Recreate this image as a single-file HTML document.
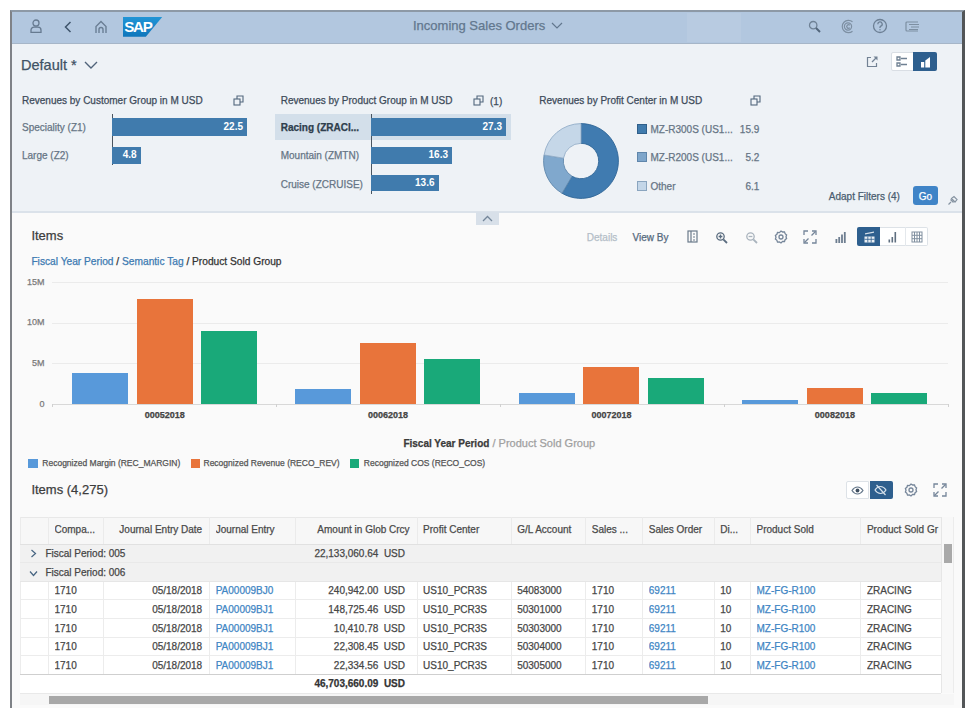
<!DOCTYPE html><html><head><meta charset="utf-8"><style>
*{margin:0;padding:0;box-sizing:border-box}
html,body{width:975px;height:714px;overflow:hidden;background:#fff;font-family:"Liberation Sans",sans-serif;color:#333}
.a{position:absolute;white-space:nowrap;-webkit-text-stroke:0.25px currentColor}
#frame{position:absolute;left:10px;top:10px;width:955px;height:698px;background:#fafafa;border-left:2px solid #7f8287;border-top:2px solid #8d99a6;border-right:3px solid #535658;overflow:hidden}
#hdr{position:absolute;left:0;top:0;width:100%;height:32px;background:#b2c7df;border-bottom:1px solid #a6b6c8}
#fb{position:absolute;left:0;top:32px;width:100%;height:169px;background:#eef2f6;border-bottom:2px solid #dbe2ea}
.t10{font-size:10px;line-height:12px}
.bar{position:absolute;background:#407bad;color:#fff;font-size:10px;font-weight:bold;text-align:right;padding-right:4px}
.ico{position:absolute}
</style></head><body><div id="frame"><div id="hdr">
<div class="a" style="left:675.2px;top:1px;width:54.3px;height:29px;background:#b8cbe1;"></div>
<svg class="ico" style="left:17.5px;top:7px;" width="12" height="14" viewBox="0 0 12 14"><g fill="none" stroke="#667a90" stroke-width="1.3"><circle cx="6" cy="4" r="3"/><path d="M1 13.5v-2.3a3 3 0 0 1 3-3h4a3 3 0 0 1 3 3v2.3z"/></g></svg>
<svg class="ico" style="left:51px;top:8px;" width="10" height="14" viewBox="0 0 10 14"><path d="M7.5 2L2.5 7l5 5" fill="none" stroke="#3f556c" stroke-width="1.5"/></svg>
<svg class="ico" style="left:82px;top:8px;" width="14" height="14" viewBox="0 0 14 14"><path d="M2 13V6.5L7 1.5l5 5V13M5 13V9.5a2 2 0 0 1 4 0V13" fill="none" stroke="#6a7e94" stroke-width="1.4"/></svg>
<svg class="ico" style="left:110.9px;top:4.9px;" width="40" height="20" viewBox="0 0 40 20"><defs><linearGradient id="sg" x1="0" y1="0" x2="0" y2="1"><stop offset="0" stop-color="#2195d6"/><stop offset="1" stop-color="#0f76bb"/></linearGradient></defs><path d="M0 0H39.2L22.8 19.7H0z" fill="url(#sg)"/><text x="1.2" y="14.7" font-family="Liberation Sans" font-weight="bold" font-size="15.2" fill="#fff" letter-spacing="-1.3">SAP</text></svg>
<div class="a" style="left:401px;top:6.3px;font-size:13px;line-height:15.6px;color:#62778e;font-weight:400;">Incoming Sales Orders</div>
<svg class="ico" style="left:539px;top:9.5px;" width="12" height="8" viewBox="0 0 12 8"><path d="M1 1l5 5 5-5" fill="none" stroke="#62778e" stroke-width="1.2"/></svg>
<svg class="ico" style="left:796px;top:8px;" width="14" height="14" viewBox="0 0 14 14"><g fill="none" stroke="#6f8296" stroke-width="1.3"><circle cx="5.2" cy="5.2" r="3.7"/><path d="M8 8L12 12" stroke="#52667b" stroke-width="1.9"/></g></svg>
<svg class="ico" style="left:829px;top:7px;" width="14" height="15" viewBox="0 0 14 15"><g fill="none" stroke="#7d8fa2" stroke-width="1.2"><path d="M11.5 2.8A6.2 6.2 0 1 0 11.5 12.2"/><circle cx="7" cy="7.5" r="3.6"/><path d="M8.8 6.2A1.8 1.8 0 1 0 8.8 8.8"/></g></svg>
<svg class="ico" style="left:860px;top:6px;" width="16" height="16" viewBox="0 0 16 16"><g fill="none" stroke="#6c7f94" stroke-width="1.3"><circle cx="8" cy="8" r="6.5"/><path d="M5.8 6.2a2.2 2.2 0 1 1 3 2c-.6.3-.8.7-.8 1.3v.6"/></g><circle cx="8" cy="11.8" r=".7" fill="#6c7f94"/></svg>
<svg class="ico" style="left:893px;top:9px;" width="15" height="11" viewBox="0 0 15 11"><g fill="none" stroke="#7d8fa2" stroke-width="1.2"><path d="M13 1H2a1 1 0 0 0-1 1v7a1 1 0 0 0 1 1h11"/><path d="M4 3.5h10M6 6h8M4 8.5h9"/></g></svg>
</div>
<div id="fb">
<div class="a" style="left:9px;top:12.7px;font-size:14.5px;line-height:17.4px;color:#3f5265;font-weight:400;">Default *</div>
<svg class="ico" style="left:72px;top:17px;" width="14" height="9" viewBox="0 0 14 9"><path d="M1 1l6 6 6-6" fill="none" stroke="#50637a" stroke-width="1.4"/></svg>
<svg class="ico" style="left:854px;top:12px;" width="12" height="12" viewBox="0 0 12 12"><g fill="none" stroke="#728294" stroke-width="1.2"><path d="M5 1.5H1.5v9h9V7"/><path d="M6 6l4.5-4.5"/></g><path d="M7.5 0.5h4v4z" fill="#728294"/></svg>
<div class="a" style="left:878.6px;top:7.8px;width:23px;height:19px;background:#fff;border:1px solid #d9dee4;border-radius:2px 0 0 2px"></div>
<svg class="ico" style="left:884px;top:12px;" width="12" height="11" viewBox="0 0 12 11"><path d="M1 1h3v3H1zM1 7h3v3H1zM5 2.5h6M5 8.5h6" fill="none" stroke="#6f8092" stroke-width="1.3"/></svg>
<div class="a" style="left:901.4px;top:7.8px;width:23.5px;height:19px;background:#2e5f8e;border-radius:0 2px 2px 0"></div>
<svg class="ico" style="left:907.5px;top:12px;" width="12" height="12" viewBox="0 0 12 12"><g fill="#fff"><rect x="1" y="6" width="3.2" height="5.5"/><path d="M5.3 11.5V4.5L10 1v10.5z"/></g></svg>
<div class="a" style="left:10px;top:51px;font-size:10px;line-height:12.0px;color:#3d4b5a;font-weight:400;">Revenues by Customer Group in M USD</div>
<svg class="ico" style="left:221px;top:51px;" width="11" height="11" viewBox="0 0 11 11"><g fill="none" stroke="#52677d" stroke-width="1.1"><rect x="1" y="4" width="6" height="6"/><path d="M4 4V1h6v6H7"/></g></svg>
<div class="a" style="left:10px;top:78.2px;font-size:10px;line-height:12.0px;color:#667585;font-weight:400;">Speciality (Z1)</div>
<div class="a" style="left:10px;top:106.2px;font-size:10px;line-height:12.0px;color:#667585;font-weight:400;">Large (Z2)</div>
<div class="a" style="left:99.5px;top:70px;width:1px;height:51px;background:#4a5560;"></div>
<div class="bar" style="left:100px;top:74.3px;width:135px;height:17.4px;line-height:17.4px">22.5</div>
<div class="bar" style="left:100px;top:102.9px;width:28.7px;height:16.8px;line-height:16.8px">4.8</div>
<div class="a" style="left:263.3px;top:70.3px;width:236px;height:25.4px;background:#d3dfea;"></div>
<div class="a" style="left:268.7px;top:51px;font-size:10px;line-height:12.0px;color:#3d4b5a;font-weight:400;">Revenues by Product Group in M USD</div>
<svg class="ico" style="left:461px;top:51px;" width="11" height="11" viewBox="0 0 11 11"><g fill="none" stroke="#52677d" stroke-width="1.1"><rect x="1" y="4" width="6" height="6"/><path d="M4 4V1h6v6H7"/></g></svg>
<div class="a" style="left:478px;top:52px;font-size:10px;line-height:12.0px;color:#3d4b5a;font-weight:400;">(1)</div>
<div class="a" style="left:268.7px;top:78.2px;font-size:10px;line-height:12.0px;color:#2f3e4d;font-weight:700;">Racing (ZRACI...</div>
<div class="a" style="left:268.7px;top:106.2px;font-size:10px;line-height:12.0px;color:#667585;font-weight:400;">Mountain (ZMTN)</div>
<div class="a" style="left:268.7px;top:134.5px;font-size:10px;line-height:12.0px;color:#667585;font-weight:400;">Cruise (ZCRUISE)</div>
<div class="a" style="left:358.5px;top:70px;width:1px;height:80px;background:#4a5560;"></div>
<div class="bar" style="left:359px;top:74.3px;width:135px;height:17.4px;line-height:17.4px">27.3</div>
<div class="bar" style="left:359px;top:102.9px;width:81px;height:16.8px;line-height:16.8px">16.3</div>
<div class="bar" style="left:359px;top:130.9px;width:67.5px;height:16.1px;line-height:16.1px">13.6</div>
<div class="a" style="left:527.3px;top:51px;font-size:10px;line-height:12.0px;color:#3d4b5a;font-weight:400;">Revenues by Profit Center in M USD</div>
<svg class="ico" style="left:738px;top:51px;" width="11" height="11" viewBox="0 0 11 11"><g fill="none" stroke="#52677d" stroke-width="1.1"><rect x="1" y="4" width="6" height="6"/><path d="M4 4V1h6v6H7"/></g></svg>
<svg class="ico" style="left:530.7px;top:79.2px;" width="76" height="76" viewBox="-38 -38 76 76"><path d="M0.00 -37.40A37.4 37.4 0 1 1 -18.95 32.24L-8.97 15.26A17.7 17.7 0 1 0 0.00 -17.70Z" fill="#407bb0" stroke="#2f6596" stroke-width="0.9"/><path d="M-18.95 32.24A37.4 37.4 0 0 1 -36.91 -6.02L-17.47 -2.85A17.7 17.7 0 0 0 -8.97 15.26Z" fill="#80a8cd" stroke="#6088ad" stroke-width="0.9"/><path d="M-36.91 -6.02A37.4 37.4 0 0 1 -0.00 -37.40L-0.00 -17.70A17.7 17.7 0 0 0 -17.47 -2.85Z" fill="#c5d7e8" stroke="#93aec8" stroke-width="0.9"/></svg>
<div class="a" style="left:625.2px;top:80px;width:10px;height:10px;background:#407bad;border:1px solid #2f5f8a"></div>
<div class="a" style="left:625.2px;top:108px;width:10px;height:10px;background:#7ea6cb;border:1px solid #5f86ab"></div>
<div class="a" style="left:625.2px;top:137px;width:10px;height:10px;background:#c3d6e8;border:1px solid #8aa5bf"></div>
<div class="a" style="left:638.5px;top:80.2px;font-size:10px;line-height:12.0px;color:#667585;font-weight:400;">MZ-R300S (US1...</div>
<div class="a" style="left:638.5px;top:108.2px;font-size:10px;line-height:12.0px;color:#667585;font-weight:400;">MZ-R200S (US1...</div>
<div class="a" style="left:638.5px;top:137.2px;font-size:10px;line-height:12.0px;color:#667585;font-weight:400;">Other</div>
<div class="a" style="left:707.3px;top:79.8px;font-size:10px;line-height:12.0px;color:#667585;font-weight:400;width:40px;text-align:right">15.9</div>
<div class="a" style="left:707.3px;top:107.8px;font-size:10px;line-height:12.0px;color:#667585;font-weight:400;width:40px;text-align:right">5.2</div>
<div class="a" style="left:707.3px;top:136.8px;font-size:10px;line-height:12.0px;color:#667585;font-weight:400;width:40px;text-align:right">6.1</div>
<div class="a" style="left:816.8px;top:146.5px;font-size:10px;line-height:12.0px;color:#4a5d70;font-weight:400;">Adapt Filters (4)</div>
<div class="a" style="left:900.8px;top:141.7px;width:25px;height:19.3px;background:#3f84c7;border-radius:3px"></div>
<div class="a" style="left:900.8px;top:146.5px;font-size:10px;line-height:12.0px;color:#fff;font-weight:400;width:25px;text-align:center">Go</div>
<svg class="ico" style="left:935px;top:151px;" width="11" height="11" viewBox="0 0 11 11"><path d="M1.5 9.5l2.5-2.5M3.5 4.5l3 3M4.5 3.5l2.5-2 3 3-2 2.5z" fill="none" stroke="#8593a1" stroke-width="1.2"/></svg>
</div>
<div class="a" style="left:463.7px;top:200px;width:23.3px;height:13px;background:#d8e0e9;"></div>
<svg class="ico" style="left:470px;top:203px;" width="11" height="7" viewBox="0 0 11 7"><path d="M1 6l4.5-4.5L10 6" fill="none" stroke="#74869a" stroke-width="1.3"/></svg>
<div class="a" style="left:19.4px;top:215.6px;font-size:13px;line-height:15.6px;color:#3d3d3d;font-weight:400;">Items</div>
<div class="a" style="left:19.4px;top:244.2px;font-size:10.2px;line-height:12.24px;color:#333;font-weight:400;"><span style="color:#3d7ab2">Fiscal Year Period</span> / <span style="color:#3d7ab2">Semantic Tag</span> / Product Sold Group</div>
<div class="a" style="left:574.8px;top:219.9px;font-size:10px;line-height:12.0px;color:#b4bec8;font-weight:400;">Details</div>
<div class="a" style="left:620.6px;top:219.9px;font-size:10px;line-height:12.0px;color:#566a7e;font-weight:400;">View By</div>
<svg class="ico" style="left:675px;top:218px;" width="11" height="13" viewBox="0 0 11 13"><g fill="none" stroke="#6a7a8a" stroke-width="1.2"><rect x="1" y="1" width="9" height="11"/><path d="M4 1v11M6 4h2M6 7h2M6 10h2"/></g></svg>
<svg class="ico" style="left:703px;top:218.5px;" width="13" height="13" viewBox="0 0 13 13"><g fill="none" stroke="#5a6c7f" stroke-width="1.3"><circle cx="5.5" cy="5.5" r="3.7"/><path d="M3.6 5.5h3.8M5.5 3.6v3.8"/><path d="M8.3 8.3l3.7 3.7" stroke-width="1.8"/></g></svg>
<svg class="ico" style="left:733px;top:218.5px;" width="13" height="13" viewBox="0 0 13 13"><g fill="none" stroke="#a9b3bd" stroke-width="1.3"><circle cx="5.5" cy="5.5" r="3.7"/><path d="M3.6 5.5h3.8"/><path d="M8.3 8.3l3.7 3.7" stroke-width="1.8"/></g></svg>
<svg class="ico" style="left:761.5px;top:218px;" width="14" height="14" viewBox="0 0 14 14"><g fill="none" stroke="#76869a" stroke-width="1.3"><path d="M7 1l1.6 1 1.9-.1.6 1.8 1.5 1.2-.6 1.8.6 1.8-1.5 1.2-.6 1.8-1.9-.1L7 13l-1.6-1-1.9.1-.6-1.8L1.4 9.1 2 7.3 1.4 5.5l1.5-1.2.6-1.8 1.9.1z"/><circle cx="7" cy="7" r="2"/></g></svg>
<svg class="ico" style="left:790.5px;top:217.5px;" width="14" height="14" viewBox="0 0 14 14"><g fill="none" stroke="#76869a" stroke-width="1.3"><path d="M1 5V1h4M9 13h4V9M1 9v4h4M13 5V1H9"/><path d="M8.5 5.5L12.5 1.5M5.5 8.5L1.5 12.5"/></g></svg>
<svg class="ico" style="left:821.5px;top:218.5px;" width="12" height="12" viewBox="0 0 12 12"><g fill="#6d7d8f"><rect x="1.5" y="8" width="1.8" height="4"/><rect x="4.3" y="6" width="1.8" height="6"/><rect x="7.1" y="3.5" width="1.8" height="8.5"/><rect x="9.9" y="1" width="1.8" height="11"/></g></svg>
<div class="a" style="left:844.9px;top:215.1px;width:23.4px;height:18.5px;background:#2e5f8e;border-radius:2px 0 0 2px"></div>
<svg class="ico" style="left:850.5px;top:218px;" width="13" height="13" viewBox="0 0 13 13"><g fill="#fff"><path d="M2 3.2L11 1.5v1.2L2 4.4z" opacity=".8"/><rect x="1.5" y="6.5" width="10" height="6" opacity=".9"/></g><g stroke="#2e5f8e" stroke-width=".8"><path d="M1.5 9.3h10M4.8 6.5v6M8.2 6.5v6"/></g></svg>
<div class="a" style="left:868.3px;top:215.1px;width:48px;height:18.5px;background:#fff;border:1px solid #dde2e7;border-left:none;border-radius:0 2px 2px 0"></div>
<div class="a" style="left:892.5px;top:215.1px;width:1px;height:18.5px;background:#e4e8ec;"></div>
<svg class="ico" style="left:875px;top:219px;" width="12" height="12" viewBox="0 0 12 12"><g fill="#5f6f80"><rect x="1.5" y="8.5" width="1.6" height="3"/><rect x="4.5" y="6" width="1.6" height="5.5"/><rect x="7.5" y="1" width="1.6" height="10.5"/></g></svg>
<svg class="ico" style="left:898.5px;top:218.5px;" width="12" height="12" viewBox="0 0 12 12"><g fill="none" stroke="#8190a0" stroke-width="1"><rect x="1" y="1" width="10" height="10"/><path d="M3.5 1v10M6 1v10M8.5 1v10M1 4.3h10M1 7.7h10"/></g></svg>
<div class="a" style="left:39.5px;top:270.3px;width:896.2px;height:1px;background:#ebebeb;"></div>
<div class="a" style="left:0px;top:264.8px;font-size:9px;line-height:10.8px;color:#7a7a7a;font-weight:400;width:32.5px;text-align:right">15M</div>
<div class="a" style="left:39.5px;top:310.9px;width:896.2px;height:1px;background:#ebebeb;"></div>
<div class="a" style="left:0px;top:305.4px;font-size:9px;line-height:10.8px;color:#7a7a7a;font-weight:400;width:32.5px;text-align:right">10M</div>
<div class="a" style="left:39.5px;top:351.2px;width:896.2px;height:1px;background:#ebebeb;"></div>
<div class="a" style="left:0px;top:345.7px;font-size:9px;line-height:10.8px;color:#7a7a7a;font-weight:400;width:32.5px;text-align:right">5M</div>
<div class="a" style="left:39.5px;top:392px;width:896.2px;height:1px;background:#d8d8d8;"></div>
<div class="a" style="left:0px;top:386.5px;font-size:9px;line-height:10.8px;color:#7a7a7a;font-weight:400;width:32.5px;text-align:right">0</div>
<div class="a" style="left:60.2px;top:361.1px;width:56px;height:30.899999999999977px;background:#5899da;"></div>
<div class="a" style="left:124.60000000000001px;top:286.6px;width:56px;height:105.39999999999998px;background:#e8743b;"></div>
<div class="a" style="left:189.0px;top:318.6px;width:56px;height:73.39999999999998px;background:#19a979;"></div>
<div class="a" style="left:112.80000000000001px;top:397.8px;font-size:9px;line-height:10.8px;color:#444;font-weight:700;width:80px;text-align:center">00052018</div>
<div class="a" style="left:283.4px;top:376.5px;width:56px;height:15.5px;background:#5899da;"></div>
<div class="a" style="left:347.79999999999995px;top:330.9px;width:56px;height:61.10000000000002px;background:#e8743b;"></div>
<div class="a" style="left:412.2px;top:347.2px;width:56px;height:44.80000000000001px;background:#19a979;"></div>
<div class="a" style="left:336.0px;top:397.8px;font-size:9px;line-height:10.8px;color:#444;font-weight:700;width:80px;text-align:center">00062018</div>
<div class="a" style="left:507.0px;top:381.1px;width:56px;height:10.899999999999977px;background:#5899da;"></div>
<div class="a" style="left:571.4px;top:354.9px;width:56px;height:37.10000000000002px;background:#e8743b;"></div>
<div class="a" style="left:635.8px;top:366.3px;width:56px;height:25.69999999999999px;background:#19a979;"></div>
<div class="a" style="left:559.6px;top:397.8px;font-size:9px;line-height:10.8px;color:#444;font-weight:700;width:80px;text-align:center">00072018</div>
<div class="a" style="left:730.3px;top:387.9px;width:56px;height:4.100000000000023px;background:#5899da;"></div>
<div class="a" style="left:794.6999999999999px;top:376.1px;width:56px;height:15.899999999999977px;background:#e8743b;"></div>
<div class="a" style="left:859.0999999999999px;top:380.9px;width:56px;height:11.100000000000023px;background:#19a979;"></div>
<div class="a" style="left:782.9px;top:397.8px;font-size:9px;line-height:10.8px;color:#444;font-weight:700;width:80px;text-align:center">00082018</div>
<div class="a" style="left:39.5px;top:392px;width:1px;height:3px;background:#d0d0d0;"></div>
<div class="a" style="left:263.5px;top:392px;width:1px;height:3px;background:#d0d0d0;"></div>
<div class="a" style="left:487.5px;top:392px;width:1px;height:3px;background:#d0d0d0;"></div>
<div class="a" style="left:711.5px;top:392px;width:1px;height:3px;background:#d0d0d0;"></div>
<div class="a" style="left:935.5px;top:392px;width:1px;height:3px;background:#d0d0d0;"></div>
<div class="a" style="left:391.4px;top:424.7px;font-size:10px;line-height:12.0px;color:#3a3a3a;font-weight:700;">Fiscal Year Period<span style="font-weight:400;color:#a0a0a0;font-size:11px"> / Product Sold Group</span></div>
<div class="a" style="left:16px;top:446.5px;width:9.5px;height:9.5px;background:#5899da;"></div>
<div class="a" style="left:30.3px;top:446.2px;font-size:8.5px;line-height:10.2px;color:#555;font-weight:400;">Recognized Margin (REC_MARGIN)</div>
<div class="a" style="left:178.5px;top:446.5px;width:9.5px;height:9.5px;background:#e8743b;"></div>
<div class="a" style="left:191.5px;top:446.2px;font-size:8.5px;line-height:10.2px;color:#555;font-weight:400;">Recognized Revenue (RECO_REV)</div>
<div class="a" style="left:337.5px;top:446.5px;width:9.5px;height:9.5px;background:#19a979;"></div>
<div class="a" style="left:351.8px;top:446.2px;font-size:8.5px;line-height:10.2px;color:#555;font-weight:400;">Recognized COS (RECO_COS)</div>
<div class="a" style="left:19.4px;top:470px;font-size:13px;line-height:15.6px;color:#3d3d3d;font-weight:400;">Items (4,275)</div>
<div class="a" style="left:833.8px;top:468.8px;width:23.7px;height:18.6px;background:#fff;border:1px solid #dde2e7;border-radius:2px 0 0 2px"></div>
<svg class="ico" style="left:839px;top:473.5px;" width="13" height="9" viewBox="0 0 13 9"><g fill="none" stroke="#66788b" stroke-width="1.2"><path d="M1 4.5C2.8 1.8 4.5 1 6.5 1S10.2 1.8 12 4.5C10.2 7.2 8.5 8 6.5 8S2.8 7.2 1 4.5z"/></g><circle cx="6.5" cy="4.5" r="1.9" fill="#3f4f60"/></svg>
<div class="a" style="left:857.5px;top:468.8px;width:23px;height:18.6px;background:#2e5f8e;border-radius:0 2px 2px 0"></div>
<svg class="ico" style="left:862px;top:472px;" width="13" height="12" viewBox="0 0 13 12"><g fill="none" stroke="#d8e2ec" stroke-width="1.2"><path d="M1 6C2.8 3.3 4.5 2.5 6.5 2.5S10.2 3.3 12 6C10.2 8.7 8.5 9.5 6.5 9.5S2.8 8.7 1 6z"/><path d="M2.5 1l9 10"/></g></svg>
<svg class="ico" style="left:891.8px;top:471px;" width="14" height="14" viewBox="0 0 14 14"><g fill="none" stroke="#76869a" stroke-width="1.3"><path d="M7 1l1.6 1 1.9-.1.6 1.8 1.5 1.2-.6 1.8.6 1.8-1.5 1.2-.6 1.8-1.9-.1L7 13l-1.6-1-1.9.1-.6-1.8L1.4 9.1 2 7.3 1.4 5.5l1.5-1.2.6-1.8 1.9.1z"/><circle cx="7" cy="7" r="2"/></g></svg>
<svg class="ico" style="left:921.3px;top:471px;" width="14" height="14" viewBox="0 0 14 14"><g fill="none" stroke="#76869a" stroke-width="1.3"><path d="M1 5V1h4M9 13h4V9M1 9v4h4M13 5V1H9"/><path d="M8.5 5.5L12.5 1.5M5.5 8.5L1.5 12.5"/></g></svg>
<div class="a" style="left:7.9px;top:505.3px;width:921.2px;height:26.400000000000034px;background:#f7f7f7;border-top:1px solid #e8e8e8"></div>
<div class="a" style="left:7.9px;top:531.7px;width:921.2px;height:37.09999999999991px;background:#f1f1f1;"></div>
<div class="a" style="left:7.9px;top:568.8px;width:921.2px;height:93.0px;background:#fff;"></div>
<div class="a" style="left:7.9px;top:661.8px;width:921.2px;height:19.200000000000045px;background:#fff;"></div>
<div class="a" style="left:929.1px;top:505.3px;width:13px;height:175.7px;background:#f8f8f8;border-left:1px solid #e6e6e6;border-right:1px solid #ececec"></div>
<div class="a" style="left:932.1px;top:532px;width:8.2px;height:19px;background:#a9a9a9;"></div>
<div class="a" style="left:7.899999999999999px;top:505.3px;width:1px;height:26.400000000000034px;background:#ebebeb;"></div>
<div class="a" style="left:36px;top:505.3px;width:1px;height:26.400000000000034px;background:#ebebeb;"></div>
<div class="a" style="left:90.6px;top:505.3px;width:1px;height:26.400000000000034px;background:#ebebeb;"></div>
<div class="a" style="left:197.2px;top:505.3px;width:1px;height:26.400000000000034px;background:#ebebeb;"></div>
<div class="a" style="left:283px;top:505.3px;width:1px;height:26.400000000000034px;background:#ebebeb;"></div>
<div class="a" style="left:404.6px;top:505.3px;width:1px;height:26.400000000000034px;background:#ebebeb;"></div>
<div class="a" style="left:498.7px;top:505.3px;width:1px;height:26.400000000000034px;background:#ebebeb;"></div>
<div class="a" style="left:573.3px;top:505.3px;width:1px;height:26.400000000000034px;background:#ebebeb;"></div>
<div class="a" style="left:630.3px;top:505.3px;width:1px;height:26.400000000000034px;background:#ebebeb;"></div>
<div class="a" style="left:701.8px;top:505.3px;width:1px;height:26.400000000000034px;background:#ebebeb;"></div>
<div class="a" style="left:738px;top:505.3px;width:1px;height:26.400000000000034px;background:#ebebeb;"></div>
<div class="a" style="left:848.4px;top:505.3px;width:1px;height:26.400000000000034px;background:#ebebeb;"></div>
<div class="a" style="left:7.899999999999999px;top:568.8px;width:1px;height:93.0px;background:#ececec;"></div>
<div class="a" style="left:36px;top:568.8px;width:1px;height:93.0px;background:#ececec;"></div>
<div class="a" style="left:90.6px;top:568.8px;width:1px;height:93.0px;background:#ececec;"></div>
<div class="a" style="left:197.2px;top:568.8px;width:1px;height:93.0px;background:#ececec;"></div>
<div class="a" style="left:283px;top:568.8px;width:1px;height:93.0px;background:#ececec;"></div>
<div class="a" style="left:404.6px;top:568.8px;width:1px;height:93.0px;background:#ececec;"></div>
<div class="a" style="left:498.7px;top:568.8px;width:1px;height:93.0px;background:#ececec;"></div>
<div class="a" style="left:573.3px;top:568.8px;width:1px;height:93.0px;background:#ececec;"></div>
<div class="a" style="left:630.3px;top:568.8px;width:1px;height:93.0px;background:#ececec;"></div>
<div class="a" style="left:701.8px;top:568.8px;width:1px;height:93.0px;background:#ececec;"></div>
<div class="a" style="left:738px;top:568.8px;width:1px;height:93.0px;background:#ececec;"></div>
<div class="a" style="left:848.4px;top:568.8px;width:1px;height:93.0px;background:#ececec;"></div>
<div class="a" style="left:929.1px;top:568.8px;width:1px;height:93.0px;background:#ececec;"></div>
<div class="a" style="left:7.9px;top:531.7px;width:921.2px;height:1px;background:#e1e1e1;"></div>
<div class="a" style="left:7.9px;top:550.3px;width:921.2px;height:1px;background:#e9e9e9;"></div>
<div class="a" style="left:7.9px;top:568.8px;width:921.2px;height:1px;background:#e6e6e6;"></div>
<div class="a" style="left:7.9px;top:587.4px;width:921.2px;height:1px;background:#ececec;"></div>
<div class="a" style="left:7.9px;top:606.0px;width:921.2px;height:1px;background:#ececec;"></div>
<div class="a" style="left:7.9px;top:624.5999999999999px;width:921.2px;height:1px;background:#ececec;"></div>
<div class="a" style="left:7.9px;top:643.1999999999999px;width:921.2px;height:1px;background:#ececec;"></div>
<div class="a" style="left:7.9px;top:661.8px;width:921.2px;height:1px;background:#cfcfcf;"></div>
<div class="a" style="left:42.5px;top:512px;font-size:10px;line-height:12.0px;color:#4a4a4a;font-weight:400;width:48.599999999999994px;overflow:hidden">Compa...</div>
<div class="a" style="left:90.6px;top:512px;font-size:10px;line-height:12.0px;color:#4a4a4a;font-weight:400;width:99.6px;text-align:right">Journal Entry Date</div>
<div class="a" style="left:203.7px;top:512px;font-size:10px;line-height:12.0px;color:#4a4a4a;font-weight:400;width:79.80000000000001px;overflow:hidden">Journal Entry</div>
<div class="a" style="left:283px;top:512px;font-size:10px;line-height:12.0px;color:#4a4a4a;font-weight:400;width:114.60000000000002px;text-align:right">Amount in Glob Crcy</div>
<div class="a" style="left:411.1px;top:512px;font-size:10px;line-height:12.0px;color:#4a4a4a;font-weight:400;width:88.09999999999997px;overflow:hidden">Profit Center</div>
<div class="a" style="left:505.2px;top:512px;font-size:10px;line-height:12.0px;color:#4a4a4a;font-weight:400;width:68.59999999999997px;overflow:hidden">G/L Account</div>
<div class="a" style="left:579.8px;top:512px;font-size:10px;line-height:12.0px;color:#4a4a4a;font-weight:400;width:51.0px;overflow:hidden">Sales ...</div>
<div class="a" style="left:636.8px;top:512px;font-size:10px;line-height:12.0px;color:#4a4a4a;font-weight:400;width:65.5px;overflow:hidden">Sales Order</div>
<div class="a" style="left:708.3px;top:512px;font-size:10px;line-height:12.0px;color:#4a4a4a;font-weight:400;width:30.200000000000045px;overflow:hidden">Di...</div>
<div class="a" style="left:744.5px;top:512px;font-size:10px;line-height:12.0px;color:#4a4a4a;font-weight:400;width:104.39999999999998px;overflow:hidden">Product Sold</div>
<div class="a" style="left:854.9px;top:512px;font-size:10px;line-height:12.0px;color:#4a4a4a;font-weight:400;width:74.20000000000005px;overflow:hidden">Product Sold Gr</div>
<svg class="ico" style="left:17.5px;top:537px;" width="7" height="9" viewBox="0 0 7 9"><path d="M1.5 1l4 3.5-4 3.5" fill="none" stroke="#476582" stroke-width="1.2"/></svg>
<svg class="ico" style="left:16.5px;top:557.5px;" width="9" height="7" viewBox="0 0 9 7"><path d="M1 1.5l3.5 4 3.5-4" fill="none" stroke="#476582" stroke-width="1.2"/></svg>
<div class="a" style="left:33.4px;top:536.3px;font-size:10px;line-height:12.0px;color:#474747;font-weight:400;">Fiscal Period: 005</div>
<div class="a" style="left:33.4px;top:554.6px;font-size:10px;line-height:12.0px;color:#474747;font-weight:400;">Fiscal Period: 006</div>
<div class="a" style="left:283px;top:536.3px;font-size:10px;line-height:12.0px;color:#474747;font-weight:400;width:110px;text-align:right">22,133,060.64&nbsp;&nbsp;USD</div>
<div class="a" style="left:42.5px;top:573.3px;font-size:10px;line-height:12.0px;color:#474747;font-weight:400;width:48.599999999999994px;overflow:hidden">1710</div>
<div class="a" style="left:90.6px;top:573.3px;font-size:10px;line-height:12.0px;color:#474747;font-weight:400;width:99.6px;text-align:right">05/18/2018</div>
<div class="a" style="left:203.7px;top:573.3px;font-size:10px;line-height:12.0px;color:#3f86c4;font-weight:400;width:79.80000000000001px;overflow:hidden">PA00009BJ0</div>
<div class="a" style="left:283px;top:573.3px;font-size:10px;line-height:12.0px;color:#474747;font-weight:400;width:110px;text-align:right">240,942.00&nbsp;&nbsp;USD</div>
<div class="a" style="left:411.1px;top:573.3px;font-size:10px;line-height:12.0px;color:#474747;font-weight:400;width:88.09999999999997px;overflow:hidden">US10_PCR3S</div>
<div class="a" style="left:505.2px;top:573.3px;font-size:10px;line-height:12.0px;color:#474747;font-weight:400;width:68.59999999999997px;overflow:hidden">54083000</div>
<div class="a" style="left:579.8px;top:573.3px;font-size:10px;line-height:12.0px;color:#474747;font-weight:400;width:51.0px;overflow:hidden">1710</div>
<div class="a" style="left:636.8px;top:573.3px;font-size:10px;line-height:12.0px;color:#3f86c4;font-weight:400;width:65.5px;overflow:hidden">69211</div>
<div class="a" style="left:708.3px;top:573.3px;font-size:10px;line-height:12.0px;color:#474747;font-weight:400;width:30.200000000000045px;overflow:hidden">10</div>
<div class="a" style="left:744.5px;top:573.3px;font-size:10px;line-height:12.0px;color:#3f86c4;font-weight:400;width:104.39999999999998px;overflow:hidden">MZ-FG-R100</div>
<div class="a" style="left:854.9px;top:573.3px;font-size:10px;line-height:12.0px;color:#474747;font-weight:400;width:74.70000000000005px;overflow:hidden">ZRACING</div>
<div class="a" style="left:42.5px;top:591.9px;font-size:10px;line-height:12.0px;color:#474747;font-weight:400;width:48.599999999999994px;overflow:hidden">1710</div>
<div class="a" style="left:90.6px;top:591.9px;font-size:10px;line-height:12.0px;color:#474747;font-weight:400;width:99.6px;text-align:right">05/18/2018</div>
<div class="a" style="left:203.7px;top:591.9px;font-size:10px;line-height:12.0px;color:#3f86c4;font-weight:400;width:79.80000000000001px;overflow:hidden">PA00009BJ1</div>
<div class="a" style="left:283px;top:591.9px;font-size:10px;line-height:12.0px;color:#474747;font-weight:400;width:110px;text-align:right">148,725.46&nbsp;&nbsp;USD</div>
<div class="a" style="left:411.1px;top:591.9px;font-size:10px;line-height:12.0px;color:#474747;font-weight:400;width:88.09999999999997px;overflow:hidden">US10_PCR3S</div>
<div class="a" style="left:505.2px;top:591.9px;font-size:10px;line-height:12.0px;color:#474747;font-weight:400;width:68.59999999999997px;overflow:hidden">50301000</div>
<div class="a" style="left:579.8px;top:591.9px;font-size:10px;line-height:12.0px;color:#474747;font-weight:400;width:51.0px;overflow:hidden">1710</div>
<div class="a" style="left:636.8px;top:591.9px;font-size:10px;line-height:12.0px;color:#3f86c4;font-weight:400;width:65.5px;overflow:hidden">69211</div>
<div class="a" style="left:708.3px;top:591.9px;font-size:10px;line-height:12.0px;color:#474747;font-weight:400;width:30.200000000000045px;overflow:hidden">10</div>
<div class="a" style="left:744.5px;top:591.9px;font-size:10px;line-height:12.0px;color:#3f86c4;font-weight:400;width:104.39999999999998px;overflow:hidden">MZ-FG-R100</div>
<div class="a" style="left:854.9px;top:591.9px;font-size:10px;line-height:12.0px;color:#474747;font-weight:400;width:74.70000000000005px;overflow:hidden">ZRACING</div>
<div class="a" style="left:42.5px;top:610.5px;font-size:10px;line-height:12.0px;color:#474747;font-weight:400;width:48.599999999999994px;overflow:hidden">1710</div>
<div class="a" style="left:90.6px;top:610.5px;font-size:10px;line-height:12.0px;color:#474747;font-weight:400;width:99.6px;text-align:right">05/18/2018</div>
<div class="a" style="left:203.7px;top:610.5px;font-size:10px;line-height:12.0px;color:#3f86c4;font-weight:400;width:79.80000000000001px;overflow:hidden">PA00009BJ1</div>
<div class="a" style="left:283px;top:610.5px;font-size:10px;line-height:12.0px;color:#474747;font-weight:400;width:110px;text-align:right">10,410.78&nbsp;&nbsp;USD</div>
<div class="a" style="left:411.1px;top:610.5px;font-size:10px;line-height:12.0px;color:#474747;font-weight:400;width:88.09999999999997px;overflow:hidden">US10_PCR3S</div>
<div class="a" style="left:505.2px;top:610.5px;font-size:10px;line-height:12.0px;color:#474747;font-weight:400;width:68.59999999999997px;overflow:hidden">50303000</div>
<div class="a" style="left:579.8px;top:610.5px;font-size:10px;line-height:12.0px;color:#474747;font-weight:400;width:51.0px;overflow:hidden">1710</div>
<div class="a" style="left:636.8px;top:610.5px;font-size:10px;line-height:12.0px;color:#3f86c4;font-weight:400;width:65.5px;overflow:hidden">69211</div>
<div class="a" style="left:708.3px;top:610.5px;font-size:10px;line-height:12.0px;color:#474747;font-weight:400;width:30.200000000000045px;overflow:hidden">10</div>
<div class="a" style="left:744.5px;top:610.5px;font-size:10px;line-height:12.0px;color:#3f86c4;font-weight:400;width:104.39999999999998px;overflow:hidden">MZ-FG-R100</div>
<div class="a" style="left:854.9px;top:610.5px;font-size:10px;line-height:12.0px;color:#474747;font-weight:400;width:74.70000000000005px;overflow:hidden">ZRACING</div>
<div class="a" style="left:42.5px;top:629.0999999999999px;font-size:10px;line-height:12.0px;color:#474747;font-weight:400;width:48.599999999999994px;overflow:hidden">1710</div>
<div class="a" style="left:90.6px;top:629.0999999999999px;font-size:10px;line-height:12.0px;color:#474747;font-weight:400;width:99.6px;text-align:right">05/18/2018</div>
<div class="a" style="left:203.7px;top:629.0999999999999px;font-size:10px;line-height:12.0px;color:#3f86c4;font-weight:400;width:79.80000000000001px;overflow:hidden">PA00009BJ1</div>
<div class="a" style="left:283px;top:629.0999999999999px;font-size:10px;line-height:12.0px;color:#474747;font-weight:400;width:110px;text-align:right">22,308.45&nbsp;&nbsp;USD</div>
<div class="a" style="left:411.1px;top:629.0999999999999px;font-size:10px;line-height:12.0px;color:#474747;font-weight:400;width:88.09999999999997px;overflow:hidden">US10_PCR3S</div>
<div class="a" style="left:505.2px;top:629.0999999999999px;font-size:10px;line-height:12.0px;color:#474747;font-weight:400;width:68.59999999999997px;overflow:hidden">50304000</div>
<div class="a" style="left:579.8px;top:629.0999999999999px;font-size:10px;line-height:12.0px;color:#474747;font-weight:400;width:51.0px;overflow:hidden">1710</div>
<div class="a" style="left:636.8px;top:629.0999999999999px;font-size:10px;line-height:12.0px;color:#3f86c4;font-weight:400;width:65.5px;overflow:hidden">69211</div>
<div class="a" style="left:708.3px;top:629.0999999999999px;font-size:10px;line-height:12.0px;color:#474747;font-weight:400;width:30.200000000000045px;overflow:hidden">10</div>
<div class="a" style="left:744.5px;top:629.0999999999999px;font-size:10px;line-height:12.0px;color:#3f86c4;font-weight:400;width:104.39999999999998px;overflow:hidden">MZ-FG-R100</div>
<div class="a" style="left:854.9px;top:629.0999999999999px;font-size:10px;line-height:12.0px;color:#474747;font-weight:400;width:74.70000000000005px;overflow:hidden">ZRACING</div>
<div class="a" style="left:42.5px;top:647.6999999999999px;font-size:10px;line-height:12.0px;color:#474747;font-weight:400;width:48.599999999999994px;overflow:hidden">1710</div>
<div class="a" style="left:90.6px;top:647.6999999999999px;font-size:10px;line-height:12.0px;color:#474747;font-weight:400;width:99.6px;text-align:right">05/18/2018</div>
<div class="a" style="left:203.7px;top:647.6999999999999px;font-size:10px;line-height:12.0px;color:#3f86c4;font-weight:400;width:79.80000000000001px;overflow:hidden">PA00009BJ1</div>
<div class="a" style="left:283px;top:647.6999999999999px;font-size:10px;line-height:12.0px;color:#474747;font-weight:400;width:110px;text-align:right">22,334.56&nbsp;&nbsp;USD</div>
<div class="a" style="left:411.1px;top:647.6999999999999px;font-size:10px;line-height:12.0px;color:#474747;font-weight:400;width:88.09999999999997px;overflow:hidden">US10_PCR3S</div>
<div class="a" style="left:505.2px;top:647.6999999999999px;font-size:10px;line-height:12.0px;color:#474747;font-weight:400;width:68.59999999999997px;overflow:hidden">50305000</div>
<div class="a" style="left:579.8px;top:647.6999999999999px;font-size:10px;line-height:12.0px;color:#474747;font-weight:400;width:51.0px;overflow:hidden">1710</div>
<div class="a" style="left:636.8px;top:647.6999999999999px;font-size:10px;line-height:12.0px;color:#3f86c4;font-weight:400;width:65.5px;overflow:hidden">69211</div>
<div class="a" style="left:708.3px;top:647.6999999999999px;font-size:10px;line-height:12.0px;color:#474747;font-weight:400;width:30.200000000000045px;overflow:hidden">10</div>
<div class="a" style="left:744.5px;top:647.6999999999999px;font-size:10px;line-height:12.0px;color:#3f86c4;font-weight:400;width:104.39999999999998px;overflow:hidden">MZ-FG-R100</div>
<div class="a" style="left:854.9px;top:647.6999999999999px;font-size:10px;line-height:12.0px;color:#474747;font-weight:400;width:74.70000000000005px;overflow:hidden">ZRACING</div>
<div class="a" style="left:283px;top:666px;font-size:10px;line-height:12.0px;color:#333;font-weight:700;width:110px;text-align:right">46,703,660.09&nbsp;&nbsp;USD</div>
<div class="a" style="left:7.9px;top:680.5px;width:921.2px;height:1px;background:#e9e9e9;"></div>
<div class="a" style="left:7.9px;top:682px;width:934.2px;height:11px;background:#f6f6f6;"></div>
<div class="a" style="left:36.8px;top:683.6px;width:659.5px;height:8px;background:#a8a8a8;"></div></div></body></html>
